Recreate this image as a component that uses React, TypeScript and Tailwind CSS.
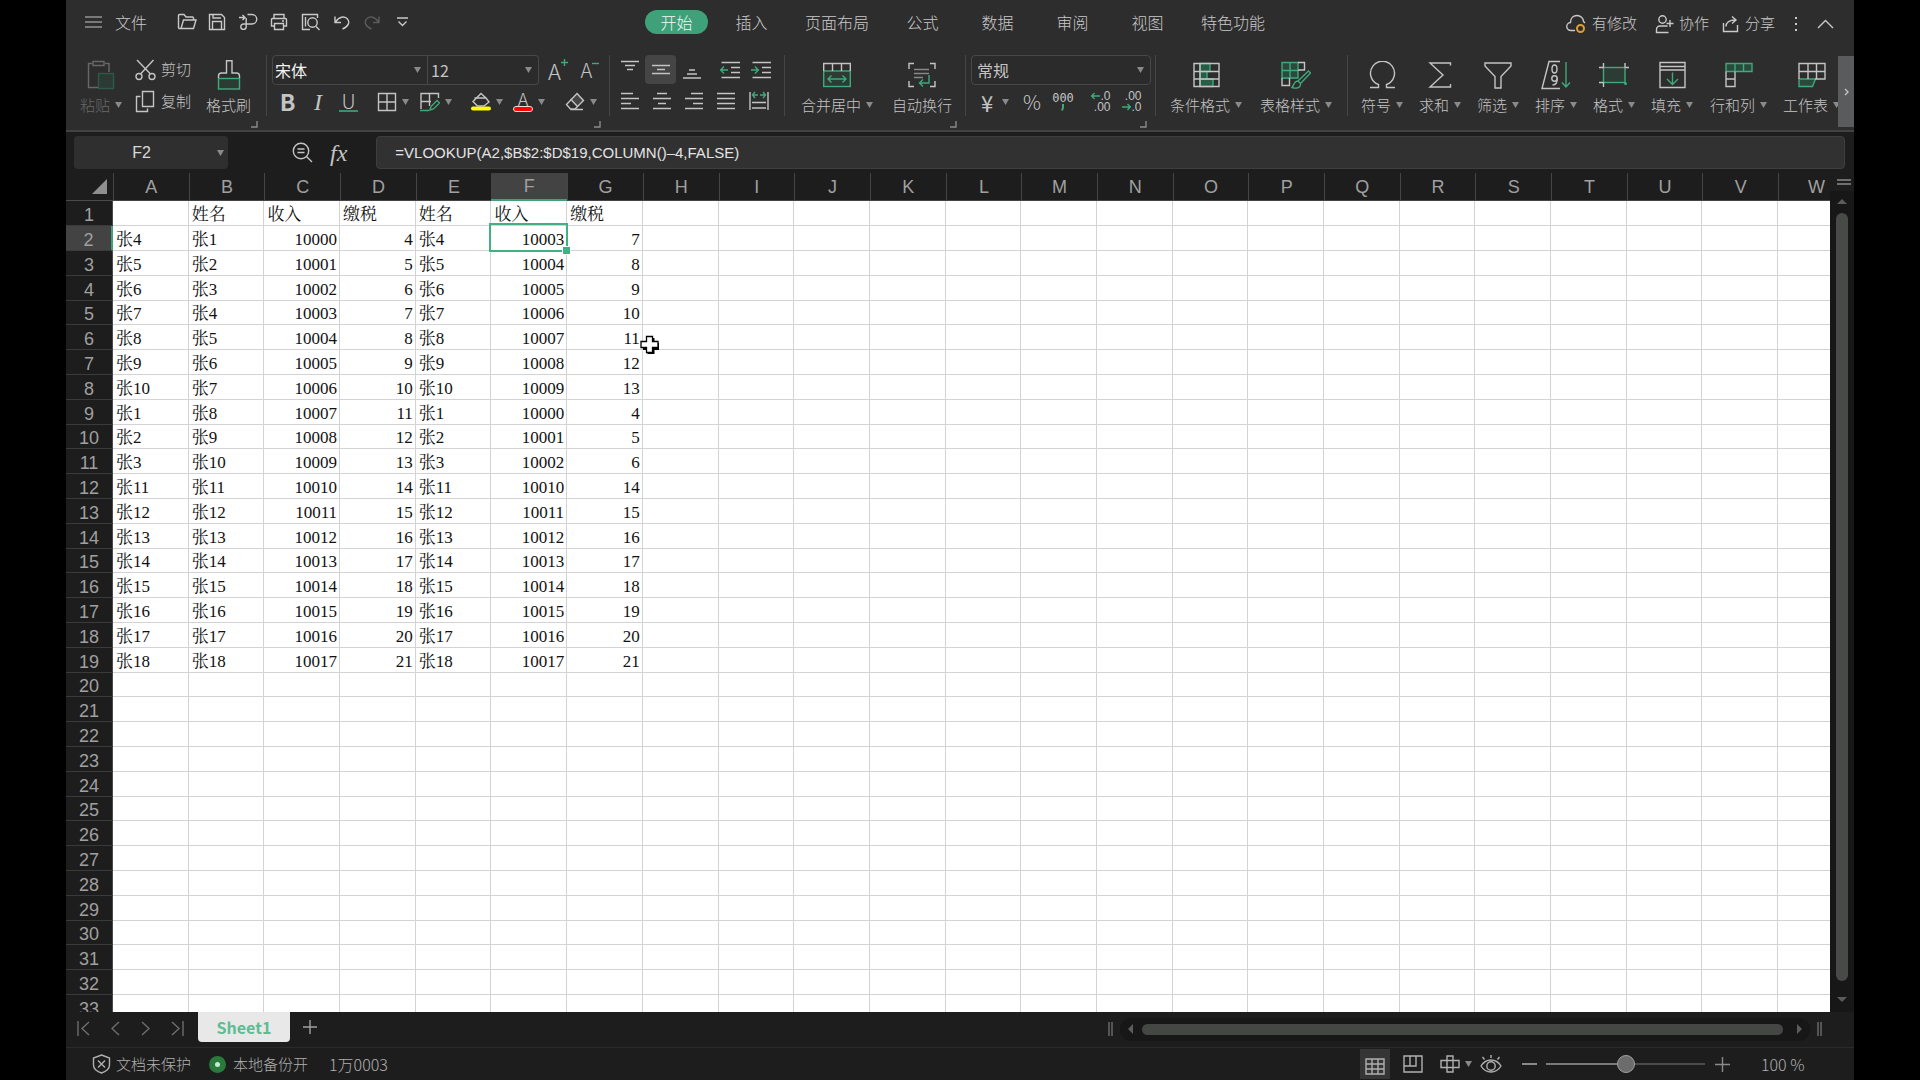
import type { ReactNode } from "react";

type IcoProps = { w: number; h: number; d?: string; g?: string; children?: ReactNode; className?: string };

/* Line icon: `d` is drawn in the current text colour, `g` in the accent green. */
function Ico({ w, h, d, g, children, className }: IcoProps) {
  return (
    <svg width={w} height={h} viewBox={`0 0 ${w} ${h}`} fill="none" stroke="currentColor" strokeWidth="1.4" className={`shrink-0 ${className ?? ""}`} aria-hidden="true">
      {children}
      {d && <path d={d} />}
      {g && <path d={g} stroke="#3fa87c" />}
    </svg>
  );
}

function Caret({ className = "" }: { className?: string }) {
  return (
    <svg width="7" height="6" viewBox="0 0 7 6" className={`shrink-0 text-[#8a8a8a] ${className}`} aria-hidden="true">
      <path d="M0 0h7L3.500 6z" fill="currentColor" />
    </svg>
  );
}

function Corner() {
  return (
    <button aria-label="更多设置" className="absolute right-2 -bottom-3 text-[#8a8a8a]">
      <Ico w={8} h={8} d="M7 1v6H1" />
    </button>
  );
}

function Big({ label, caret = true, icon, className = "" }: { label: string; caret?: boolean; icon: ReactNode; className?: string }) {
  return (
    <button className={`flex shrink-0 flex-col items-center ${className}`}>
      <span className="flex h-10 items-center justify-center">{icon}</span>
      <span className="flex items-center gap-[5px] whitespace-nowrap text-[15px] leading-5 font-light">
        {label}
        {caret && <Caret />}
      </span>
    </button>
  );
}

function Tool({ label, className = "", children, caret }: { label: string; className?: string; children: ReactNode; caret?: boolean }) {
  return (
    <button aria-label={label} title={label} className={`flex h-[29px] shrink-0 items-center justify-center gap-[5px] ${className}`}>
      {children}
      {caret && <Caret />}
    </button>
  );
}

function Pick({ label, value, options, className }: { label: string; value: string; options: string[]; className: string }) {
  return (
    <div className={`relative flex h-[30px] shrink-0 items-center border border-[#484848] bg-[#2b2b2b] ${className}`}>
      <select aria-label={label} defaultValue={value} className="h-full w-full appearance-none bg-transparent text-[16px] outline-none">
        {options.map((o) => (
          <option key={o}>{o}</option>
        ))}
      </select>
      <Caret className="pointer-events-none absolute right-1.5" />
    </div>
  );
}

const TABS = ["开始", "插入", "页面布局", "公式", "数据", "审阅", "视图", "特色功能"];

function MenuBar() {
  return (
    <nav className="flex h-11 shrink-0 items-center text-[16px] text-[#c9c9c9]">
      <div className="flex w-[573px] shrink-0 items-center pl-[19px]">
        <button aria-label="菜单">
          <Ico w={17} h={14} d="M0 2h17M0 7h17M0 12h17" className="text-[#929292]" />
        </button>
        <button className="ml-[13px] font-light">文件</button>
        <button aria-label="打开" className="ml-[30px]">
          <Ico w={20} h={18} d="M4.500 15.500H2.500a1 1 0 0 1-1-1V2.500a1 1 0 0 1 1-1h4.500l2 2.500h6.500a1 1 0 0 1 1 1v2M4 15.500l2.500-8.500h12.500l-2.500 8.500z" />
        </button>
        <button aria-label="保存" className="ml-[11px]">
          <Ico w={18} h={18} d="M1.500 1.500h12l3 3v12h-15zM4.500 16V8.500h9V16M5 1.500v3.500h8" />
        </button>
        <button aria-label="导出" className="ml-[13px]">
          <Ico w={19} h={18} d="M0 4.500h6M3.500 2l2.500 2.500-2.500 2.500M8.500 1.500h4.500a4.700 4.700 0 0 1 0 9.500H4.500a2.700 2.700 0 1 0 2.700 2.700V5" />
        </button>
        <button aria-label="打印" className="ml-[12px]">
          <Ico w={18} h={18} d="M4 5V1.500h10V5M4 13H1.500V6.500a1 1 0 0 1 1-1h13a1 1 0 0 1 1 1V13H14M4.500 10.500h9v6h-9zM12 8h2" />
        </button>
        <button aria-label="打印预览" className="ml-[13px]">
          <Ico w={19} h={18} d="M16.500 5V1.500h-15v15H9M15 13.500l3.500 3.500M4.500 4v9.500">
            <circle cx="11.500" cy="9.500" r="4.700" />
          </Ico>
        </button>
        <button aria-label="撤销" className="ml-[14px]">
          <Ico w={16} h={17} d="M1 2.500v6h6M1.500 8C5 2.500 10 2 13 4.500c3.500 3.500 1.500 8-4.500 10.500" />
        </button>
        <button aria-label="重做" className="ml-[14px] text-[#5a5a5a]">
          <Ico w={16} h={17} d="M15 2.500v6H9M14.500 8C11 2.500 6 2 3 4.500c-3.500 3.500-1.500 8 4.500 10.500" />
        </button>
        <button aria-label="自定义快速访问" className="ml-[17px]">
          <Ico w={11} h={10} d="M0 1h11M1.500 4.500l4 4 4-4" />
        </button>
      </div>
      <div role="tablist" className="flex shrink-0 items-center font-light">
        {TABS.map((t, i) => (
          <button key={t} role="tab" aria-selected={i === 0} className={`flex justify-center ${t.length > 2 ? "w-[96px]" : "w-[75px]"}`}>
            <span className={i === 0 ? "rounded-full bg-[#3fa179] px-[15px] text-[#eefaf4]" : ""}>{t}</span>
          </button>
        ))}
      </div>
      <div className="ml-auto flex shrink-0 items-center pt-[3px] pr-5 text-[15px] font-light">
        <button className="flex items-center gap-[5px]">
          <Ico w={21} h={20} d="M9 16.500H5a4 4 0 0 1-.5-8C4.500 4 7.500 1.500 11 1.500s6.500 2.500 6.500 6l1.500 1.500">
            <circle cx="14.500" cy="14.500" r="3.500" stroke="#dba12c" strokeWidth="2" />
          </Ico>
          有修改
        </button>
        <button className="ml-[18px] flex items-center gap-[5px]">
          <Ico w={19} h={20} d="M12.500 12H5a3.500 3.500 0 0 0-3.500 3.500V18.500h12M15 6v7M11.500 9.500h7">
            <circle cx="7.500" cy="5.500" r="3.700" />
          </Ico>
          协作
        </button>
        <button className="ml-[13px] flex items-center gap-[6px]">
          <Ico w={17} h={18} d="M1.500 8v8.500h14V10M4 11.500c0-4 3-6.500 9.500-6.500M10 1.500l4 3.500-4 3.500" />
          分享
        </button>
        <button aria-label="更多" className="ml-5">
          <svg width="2" height="14" viewBox="0 0 2 14" fill="currentColor" aria-hidden="true">
            <rect width="2" height="2" /><rect y="6" width="2" height="2" /><rect y="12" width="2" height="2" />
          </svg>
        </button>
        <button aria-label="收起功能区" className="ml-5">
          <Ico w={17} h={10} d="M1 9l7.500-7.500L16 9" />
        </button>
      </div>
    </nav>
  );
}

const ALIGN_V = [
  { label: "顶端对齐", d: "M0 1.500h18M4 5.500h10M6 9.500h6" },
  { label: "垂直居中", d: "M0 5.500h18M5 9.500h8M0 13.500h18" },
  { label: "底端对齐", d: "M6 10h6M4 14h10M0 18h18" },
];
const ALIGN_H = [
  { label: "左对齐", d: "M0 1.500h12M0 6.500h18M0 11.500h10M0 16.500h18" },
  { label: "居中对齐", d: "M4 1.500h10M0 6.500h18M5 11.500h8M0 16.500h18" },
  { label: "右对齐", d: "M6 1.500h12M0 6.500h18M8 11.500h10M0 16.500h18" },
  { label: "两端对齐", d: "M0 1.500h18M0 6.500h18M0 11.500h18M0 16.500h18" },
];

function Ribbon() {
  return (
    <div className="flex h-[86px] shrink-0 overflow-hidden pt-[11px] text-[#c4c4c4]">
      <section className="relative flex h-[61px] w-[201px] shrink-0 border-r border-[#454545] pl-[14px]">
        <Big
          label="粘贴"
          className="text-[#686868]"
          icon={
            <Ico w={28} h={30} d="M5 3.500H1.500v24H11M18 3.500h4V12M6 1.500h11v4H6z">
              <rect x="11.500" y="13.500" width="15" height="15" stroke="#2c5a47" fill="#2b3a34" />
            </Ico>
          }
        />
        <div className="ml-[13px] flex flex-col text-[15px] font-light">
          <button className="flex h-[30px] items-center gap-[5px]">
            <Ico w={21} h={22} d="M2 1l13.500 14M18.500 1L5.500 15">
              <circle cx="4" cy="17.500" r="3" /><circle cx="17" cy="17.500" r="3" />
            </Ico>
            剪切
          </button>
          <button className="mt-[3px] flex h-[30px] items-center gap-[5px]">
            <Ico w={21} h={23} d="M7.500 1.500h11v15h-11zM5.500 6.500H1.500v15h11v-3" />
            复制
          </button>
        </div>
        <Big
          label="格式刷"
          caret={false}
          className="ml-[15px]"
          icon={
            <Ico w={24} h={30} d="M1.500 18V16q0-3 3-3h5V.7h5.500V13h4.500q3 0 3 3v2">
              <rect x="1.500" y="18.500" width="21" height="10.500" stroke="#3fa87c" fill="#2d3b35" />
            </Ico>
          }
        />
        <Corner />
      </section>

      <section className="relative flex h-[61px] w-[343px] shrink-0 flex-col gap-[2px] border-r border-[#454545] pl-[5px]">
        <div className="flex">
          <Pick label="字体" value="宋体" options={["宋体", "黑体", "楷体"]} className="w-[156px] rounded-l-sm pl-[2px] text-[#f2f2f2]" />
          <Pick label="字号" value="12" options={["10", "11", "12", "14"]} className="w-[111px] rounded-r-sm border-l-0 pl-[3px]" />
          <Tool label="增大字号" className="ml-[7px] w-6">
            <span className="flex text-[22px] leading-none font-light">
              A
              <Ico w={7} h={7} g="M3.500 0v7M0 3.500h7" />
            </span>
          </Tool>
          <Tool label="减小字号" className="ml-2 w-6">
            <span className="flex text-[20px] leading-none font-light">
              A
              <Ico w={7} h={7} g="M0 3.500h7" />
            </span>
          </Tool>
        </div>
        <div className="flex">
          <Tool label="加粗" className="w-[31px] text-[23px] font-bold">B</Tool>
          <Tool label="倾斜" className="w-[30px]"><span className="font-[Liberation_Serif] text-[24px] leading-none italic">I</span></Tool>
          <Tool label="下划线" className="w-[31px]"><span className="border-b-2 border-[#3a8f6c] px-0.5 text-[20px] leading-[19px] font-light">U</span></Tool>
          <Tool label="边框" caret className="ml-[13px]">
            <Ico w={20} h={20} d="M1.500 1.500h17v17h-17zM10 1.500v17M1.500 10h17" />
          </Tool>
          <Tool label="绘制边框" caret className="ml-[11px]">
            <Ico w={20} h={20} d="M1 17V1.500h17.500V6M9.500 1.500V14M1 9.500h10" g="M0 18.500h9M10 18l1-3.500 6-6 2.500 2.500-6 6z" />
          </Tool>
          <Tool label="填充颜色" caret className="ml-[19px]">
            <Ico w={20} h={21} d="M3.500 7h11.500l3 4-5 4H6.500L2 10.500 10 2.500l5 4.500">
              <path d="M2 17.500h16" stroke="#ffff00" strokeWidth="4" strokeLinecap="round" />
            </Ico>
          </Tool>
          <Tool label="字体颜色" caret className="ml-[10px]">
            <span className="flex flex-col items-center text-[18px] leading-[15px] font-light">
              A
              <span className="h-[6px] w-5 rounded-full border border-[#f5dada] bg-[#ff0000]" />
            </span>
          </Tool>
          <Tool label="清除" caret className="ml-5">
            <Ico w={20} h={19} d="M12 1.500l6.500 7L10 17H5.500L1.500 12.500zM5.500 7l7 7.500M5.500 17.500H18">
              <path d="M12 1.500l6.500 7-6 6-7-7.500z" fill="#454545" stroke="none" />
            </Ico>
          </Tool>
        </div>
        <Corner />
      </section>

      <section className="flex h-[61px] w-[175px] shrink-0 flex-col gap-[2px] border-r border-[#454545] pl-1">
        <div className="flex">
          {ALIGN_V.map((a, i) => (
            <Tool key={a.label} label={a.label} className={`w-[31px] ${i === 1 ? "rounded bg-[#454545]" : ""}`}>
              <Ico w={18} h={20} d={a.d} />
            </Tool>
          ))}
          <Tool label="减少缩进" className="ml-2 w-[30px]">
            <Ico w={20} h={18} d="M1.500 1.500H20M11 6.500h9M11 11.500h9M1.500 16.500H20" g="M0 9h8M4 5.500L.7 9 4 12.500" />
          </Tool>
          <Tool label="增加缩进" className="w-[31px]">
            <Ico w={20} h={18} d="M1.500 1.500H20M11 6.500h9M11 11.500h9M1.500 16.500H20" g="M0 9h8M4 5.500L7.300 9 4 12.500" />
          </Tool>
        </div>
        <div className="flex">
          {ALIGN_H.map((a) => (
            <Tool key={a.label} label={a.label} className="w-8">
              <Ico w={18} h={18} d={a.d} />
            </Tool>
          ))}
          <Tool label="分散对齐" className="w-[34px]">
            <Ico w={20} h={19} d="M1 1v18M19 1v18M3 11.500h14M3 17h14" g="M9 4H3.500M6 1L3.500 4 6 7M11 4h5.500M14 1l2.500 3-2.500 3" />
          </Tool>
        </div>
      </section>

      <section className="relative flex h-[61px] w-[181px] shrink-0 border-r border-[#454545] pl-4">
        <Big
          label="合并居中"
          icon={
            <Ico w={28} h={26} d="M.7 9V1.500h26.600V9M9.500 1.500V9M18.500 1.500V9">
              <rect x=".7" y="9" width="26.600" height="15.500" stroke="#3fa87c" fill="#2d3b35" />
              <path d="M5 17h18M8.500 13.500L5 17l3.500 3.500M19.500 13.500L23 17l-3.500 3.500" stroke="#3fa87c" />
            </Ico>
          }
        />
        <Big
          label="自动换行"
          caret={false}
          className="ml-[19px]"
          icon={
            <Ico w={28} h={26} d="M1 7V1.500h5M22 1.500h5V7M1 19v5.500h5M22 24.500h5V19" g="M21 13v8H11.500M15 17.500L11.500 21l3.500 3.500">
              <path d="M6 7.500h15M6 11.500h15M6 15.500h9" stroke="#888" />
            </Ico>
          }
        />
        <Corner />
      </section>

      <section className="relative flex h-[61px] w-[190px] shrink-0 flex-col gap-[2px] border-r border-[#454545] pl-[5px]">
        <Pick label="数字格式" value="常规" options={["常规", "数值", "货币"]} className="w-[180px] rounded-sm pl-[5px]" />
        <div className="flex">
          <Tool label="货币" caret className="ml-1.5"><span className="w-5 text-[22px] leading-none">¥</span></Tool>
          <Tool label="百分比" className="ml-[7px] w-8"><span className="text-[20px] font-light">%</span></Tool>
          <Tool label="千位分隔" className="w-[30px]">
            <span className="flex flex-col items-center font-[DejaVu_Sans_Mono] text-[12px] leading-3">
              000
              <Ico w={4} h={7} className="text-[#3fa87c]"><path d="M2 0v3.500L1 6.500" strokeWidth="2" /></Ico>
            </span>
          </Tool>
          <Tool label="增加小数" className="ml-2.5 w-[26px]">
            <span className="flex flex-col items-end font-[Liberation_Sans] text-[12px] leading-[11px]">
              <span className="flex items-center"><Ico w={9} h={8} g="M0 4h9M3.500 1L.7 4l2.800 3" />.0</span>
              <span>.00</span>
            </span>
          </Tool>
          <Tool label="减少小数" className="ml-[5px] w-[26px]">
            <span className="flex flex-col items-end font-[Liberation_Sans] text-[12px] leading-[11px]">
              <span>.00</span>
              <span className="flex items-center"><Ico w={9} h={8} g="M0 4h9M5.500 1l2.800 3-2.800 3" />.0</span>
            </span>
          </Tool>
        </div>
        <Corner />
      </section>

      <section className="flex h-[61px] w-[192px] shrink-0 border-r border-[#454545] pl-3.5">
        <Big
          label="条件格式"
          icon={
            <Ico w={27} h={26} d="M1 1.500h25v23H1zM1 9.500h25M1 17h25M7 1.500v23">
              <path d="M7 1.500h10v8H7zM7 9.500h7V17H7zM7 17h13v7.500H7z" stroke="#3fa87c" fill="#2b5a47" />
            </Ico>
          }
        />
        <Big
          label="表格样式"
          className="ml-[18px]"
          icon={
            <Ico w={30} h={28} d="M1 17v7.500h7.500V17M17 1.500h6.500V9H17">
              <path d="M1 1.500h16V17H1z" fill="#2b4a3e" stroke="#3fa87c" />
              <path d="M9 1.500V17M1 9.500h16M17 20L27.500 10l2 2L19.500 22.500M17 20c-4 0-4 4-6 6.500 5 1.500 9 0 8.500-4z" stroke="#3fa87c" />
            </Ico>
          }
        />
      </section>

      <section className="flex h-[61px] min-w-0 flex-1 gap-4 overflow-hidden pl-[13px]">
        <Big label="符号" icon={<Ico w={27} h={28} d="M1 26.500h8.500V23.500A12 12 0 1 1 17.500 23.500V26.500H26" />} />
        <Big label="求和" icon={<Ico w={24} h={28} d="M22.500 4.500V2H2l13 12L2 26h20.500v-3" />} />
        <Big label="筛选" icon={<Ico w={28} h={28} d="M1 2h26v3L17 15.500V27h-6V15.500L1 5z" />} />
        <Big
          label="排序"
          icon={
            <Ico w={30} h={30} d="M19 1.500H8L1 28.500h18" g="M25 2v25M21 22.500l4 4.500 4-4.500">
              <ellipse cx="13.500" cy="9" rx="2.500" ry="4" />
              <circle cx="13.500" cy="18.500" r="2.700" />
              <path d="M16 18.500c.5 4-1 6.500-4.500 6.500" />
            </Ico>
          }
        />
        <Big
          label="格式"
          icon={
            <Ico w={30} h={26} d="M0 5.500h4.500M26 5.500h4M0 20.500h4.500M4.500 1v4.500M26 1v4.500M4.500 20.500V25">
              <rect x="4.500" y="5.500" width="21.500" height="15" stroke="#3fa87c" fill="#2d3b35" />
              <circle cx="26.500" cy="21.500" r="1.500" fill="#3fa87c" stroke="none" />
            </Ico>
          }
        />
        <Big label="填充" icon={<Ico w={27} h={28} d="M1 1.500h25v25H1zM1 9h25M1 5.500h25" g="M13.500 11.500v12M8 18l5.500 5.500L19 18" />} />
        <Big
          label="行和列"
          className="ml-px"
          icon={
            <Ico w={28} h={26} d="M1 9.500v15h9v-15M1 17h9">
              <path d="M1 1.500h26v8H1zM10 1.500v8M18.500 1.500v8" stroke="#3fa87c" fill="#2b4a3e" />
            </Ico>
          }
        />
        <Big
          label="工作表"
          icon={
            <Ico w={28} h={26} d="M1 17V1.500h26V17H17M10 1.500V17M18.500 1.500V17M1 9.500h26">
              <path d="M1 17h16.500l-3 7.500H1z" stroke="#3fa87c" fill="#2b4a3e" />
            </Ico>
          }
        />
      </section>
      <button aria-label="向右滚动" className="mt-px flex h-[71px] w-4 shrink-0 items-center justify-center bg-[#585c5c]">
        <Ico w={5} h={8} d="M1 1l3 3-3 3" />
      </button>
    </div>
  );
}

function FormulaBar() {
  return (
    <div className="flex h-[43px] shrink-0 items-center border-t-2 border-[#424242] pr-[9px] pl-2 text-[16px]">
      <div className="flex h-[33px] w-[154px] shrink-0 items-center rounded bg-[#2f2f2f] pr-1">
        <input aria-label="名称框" defaultValue="F2" className="w-full min-w-0 bg-transparent pr-2 text-center font-[Liberation_Sans] text-[#d8d8d8] outline-none" />
        <Caret />
      </div>
      <button aria-label="查找" className="ml-16 text-[#c4c4c4]">
        <Ico w={21} h={21} d="M14.500 14.500L20 20M5.500 7h7M5.500 10.500h7">
          <circle cx="9" cy="9" r="7.700" />
        </Ico>
      </button>
      <button aria-label="插入函数" className="ml-[17px] font-[Liberation_Serif] text-[24px] leading-none text-[#c4c4c4] italic">fx</button>
      <input
        aria-label="编辑栏"
        defaultValue="=VLOOKUP(A2,$B$2:$D$19,COLUMN()–4,FALSE)"
        className="ml-[29px] h-[33px] min-w-0 flex-1 rounded border border-[#3e3e3e] bg-[#313131] pl-[18px] font-[Liberation_Sans] text-[15px] text-[#e4e4e4] outline-none"
      />
    </div>
  );
}

const COLS = "ABCDEFGHIJKLMNOPQRSTUVW".split("");
const LOOKUP = [4, 5, 6, 7, 8, 9, 10, 1, 2, 3, 11, 12, 13, 14, 15, 16, 17, 18];
const ROWS: (string | number)[][] = [
  ["", "姓名", "收入", "缴税", "姓名", "收入", "缴税"],
  ...LOOKUP.map((n, i) => [`张${n}`, `张${i + 1}`, 10000 + i, 4 + i, `张${n}`, 9999 + n, 3 + n]),
];

function Sheet() {
  return (
    <div className="flex min-h-0 flex-1">
      <div className="min-w-0 flex-1 overflow-hidden">
        <table className="w-[1788px] table-fixed border-separate border-spacing-0">
          <thead>
            <tr className="h-7 text-[18px] text-[#a0a0a0]">
              <th className="w-[47px] border-b border-[#4a4a4a] p-0">
                <svg width="15" height="15" viewBox="0 0 15 15" className="ml-[26px]" aria-hidden="true"><path d="M15 0v15H0z" fill="#8f8f8f" /></svg>
              </th>
              {COLS.map((c) => (
                <th
                  key={c}
                  className={`p-0 font-[Liberation_Sans] leading-[26px] font-normal ${
                    c === "F" ? "border-b-2 border-[#3fa179] bg-[#434343]" : "border-b border-l border-[#454545]"
                  }`}
                >
                  {c}
                </th>
              ))}
            </tr>
          </thead>
          <tbody className="bg-white">
            {Array.from({ length: 33 }, (_, r) => (
              <tr key={r} className="h-[25px] text-[17px] nth-[5n]:h-6">
                <th
                  className={`border-b border-[#3a3a3a] p-0 pt-[3px] font-[Liberation_Sans] text-[18px] leading-5 font-normal text-[#a0a0a0] ${
                    r === 1 ? "border-r-2 border-r-[#3fa179] bg-[#434343]" : "border-r border-r-[#4a4a4a] bg-[#1d1d1d]"
                  }`}
                >
                  {r + 1}
                </th>
                {COLS.map((c, k) => {
                  const v = ROWS[r]?.[k] ?? "";
                  const edge = c === "W" ? "" : "border-r";
                  return (
                    <td
                      key={c}
                      className={`relative border-b border-[#d3d3d3] p-0 pt-[3px] font-[Liberation_Serif,'Noto_Serif_CJK_SC','Noto_Sans_CJK_SC',serif] leading-5 whitespace-nowrap text-[#111] ${edge} ${
                        typeof v === "number" ? "pr-[2px] text-right" : "pl-[3px]"
                      }`}
                    >
                      {v}
                      {r === 1 && c === "F" && (
                        <span className="pointer-events-none absolute -top-[3px] -right-[2px] -bottom-[2px] -left-[2px] z-10 border-2 border-[#43b083]">
                          <span className="absolute -right-[5px] -bottom-[5px] size-[9px] border border-white bg-[#43b083]" />
                        </span>
                      )}
                      {r === 5 && c === "H" && (
                        <svg width="20" height="20" viewBox="0 0 20 20" className="absolute top-[10px] -left-[3px] z-10" aria-hidden="true">
                          <path d="M7.500 3h7v5h4.500v7h-4.500v4h-7v-4H3V8h4.500z" fill="#000" />
                          <path d="M6.500 1.500h6v5H18v6h-5.500v5h-6v-5H1v-6h5.500z" fill="#fff" stroke="#000" strokeWidth="1.300" />
                        </svg>
                      )}
                    </td>
                  );
                })}
              </tr>
            ))}
          </tbody>
        </table>
      </div>
      <div className="flex w-6 shrink-0 flex-col items-center text-[#5c5c5c]">
        <div className="flex h-[18px] w-full shrink-0 items-center justify-center pl-1">
          <Ico w={14} h={6} d="M0 1h14M0 5h14" className="text-[#8a8a8a]" />
        </div>
        <div className="flex w-full flex-1 flex-col items-center bg-[#171717] pt-2">
          <svg width="10" height="5" viewBox="0 0 10 5" aria-hidden="true"><path d="M0 5h10L5 0z" fill="currentColor" /></svg>
          <div className="mt-[9px] w-3 flex-1 rounded-full bg-[#484a48]" />
          <svg width="10" height="5" viewBox="0 0 10 5" className="mt-4 mb-[10px]" aria-hidden="true"><path d="M0 0h10L5 5z" fill="currentColor" /></svg>
        </div>
      </div>
    </div>
  );
}

function SheetTabs() {
  return (
    <div className="flex h-9 shrink-0 items-start border-b border-[#2a2a2a] text-[#6e6e6e]">
      <div className="flex h-8 w-[132px] shrink-0 items-center pl-[11px]">
        <button aria-label="第一张"><Ico w={13} h={15} d="M1 0v15M12 1L5 7.500l7 6.500" /></button>
        <button aria-label="上一张" className="ml-[21px]"><Ico w={9} h={15} d="M8 1L1 7.500 8 14" /></button>
        <button aria-label="下一张" className="ml-[21px]"><Ico w={9} h={15} d="M1 1l7 6.500L1 14" /></button>
        <button aria-label="最后一张" className="ml-[21px]"><Ico w={13} h={15} d="M12 0v15M1 1l7 6.500L1 14" /></button>
      </div>
      <button className="h-[30px] w-[92px] shrink-0 rounded-b-sm bg-[#e8e8e8] text-[16px] font-bold text-[#5cbd93]">Sheet1</button>
      <button aria-label="新建工作表" className="ml-[13px] flex h-[30px] items-center text-[#a0a0a0]">
        <Ico w={14} h={14} d="M7 0v14M0 7h14" />
      </button>
      <div className="ml-auto flex h-[34px] w-[746px] shrink-0 items-center text-[#6e6e6e]">
        <Ico w={5} h={14} d="M1 0v14M4 0v14" />
        <div className="mx-[7px] flex h-[23px] flex-1 items-center rounded-full bg-[#171717] px-2">
          <svg width="5" height="10" viewBox="0 0 5 10" aria-hidden="true"><path d="M5 0v10L0 5z" fill="#5c5c5c" /></svg>
          <div className="mr-[14px] ml-[9px] h-[11px] flex-1 rounded-full bg-[#454745]" />
          <svg width="5" height="10" viewBox="0 0 5 10" aria-hidden="true"><path d="M0 0v10l5-5z" fill="#5c5c5c" /></svg>
        </div>
        <Ico w={5} h={14} d="M1 0v14M4 0v14" className="mr-8" />
      </div>
    </div>
  );
}

function StatusBar() {
  return (
    <footer className="flex h-8 shrink-0 items-center text-[15px] font-light text-[#b0b0b0]">
      <button className="ml-[26px] flex items-center gap-[5px]">
        <Ico w={19} h={20} d="M9.500 1l8 3v7c0 4-3.500 6.500-8 8-4.500-1.500-8-4-8-8V4zM6 6.500l7 7M13 6.500l-7 7" />
        文档未保护
      </button>
      <button className="ml-[18px] flex items-center gap-[7px]">
        <span className="flex size-[17px] items-center justify-center rounded-full bg-[#2b7a3d]"><span className="size-[5px] rounded-full bg-[#c5ecc9]" /></span>
        本地备份开
      </button>
      <span className="ml-[21px] text-[16px]">1万0003</span>
      <div className="ml-auto flex h-full shrink-0 items-center pr-[46px]">
        <button aria-label="普通视图" className="flex h-[30px] w-[30px] items-center justify-center bg-[#353535] pt-1">
          <Ico w={20} h={17} d="M1 1h18v15H1zM7 1v15M13 1v15M1 6h18M1 11h18" />
        </button>
        <button aria-label="页面布局视图" className="ml-[13px]"><Ico w={20} h={18} d="M1 1h18v16H1zM1 11h12V1M7 1v10" /></button>
        <button aria-label="分页预览" className="ml-[17px] flex items-center gap-[5px]">
          <Ico w={20} h={18} d="M7 1h6v16H7zM1 5.500h18v7H1z" />
          <Caret />
        </button>
        <button aria-label="护眼模式" className="ml-[8px]">
          <Ico w={22} h={20} d="M1 12c5-8 15-8 20 0-5 8-15 8-20 0zM11 1v3M2.500 3l2 2.500M19.500 3l-2 2.500">
            <circle cx="11" cy="12" r="4.200" />
          </Ico>
        </button>
        <button aria-label="缩小" className="ml-5 h-[2px] w-[15px] bg-[#8a8a8a]" />
        <input
          type="range"
          aria-label="缩放比例"
          defaultValue={50}
          className="ml-[9px] h-[18px] w-[159px] appearance-none bg-[linear-gradient(90deg,#7a7a7a_50%,#4a4a4a_50%)] bg-[length:100%_2px] bg-center bg-no-repeat [&::-webkit-slider-thumb]:size-[18px] [&::-webkit-slider-thumb]:appearance-none [&::-webkit-slider-thumb]:rounded-full [&::-webkit-slider-thumb]:border [&::-webkit-slider-thumb]:border-[#a0a0a0] [&::-webkit-slider-thumb]:bg-[#6c6c6c]"
        />
        <button aria-label="放大" className="ml-[10px] text-[#8a8a8a]"><Ico w={15} h={15} d="M7.500 0v15M0 7.500h15" /></button>
        <span className="ml-[31px] w-[47px] text-[16px] whitespace-nowrap">100 %</span>
      </div>
    </footer>
  );
}

export default function App() {
  return (
    <div className="h-screen overflow-hidden bg-black px-[66px] font-['Noto_Sans_CJK_SC',sans-serif]">
      <div className="flex h-full flex-col bg-[#1d1d1d]">
        <div className="flex shrink-0 flex-col bg-[#2d2d2d]">
          <MenuBar />
          <Ribbon />
        </div>
        <FormulaBar />
        <Sheet />
        <SheetTabs />
        <StatusBar />
      </div>
    </div>
  );
}
